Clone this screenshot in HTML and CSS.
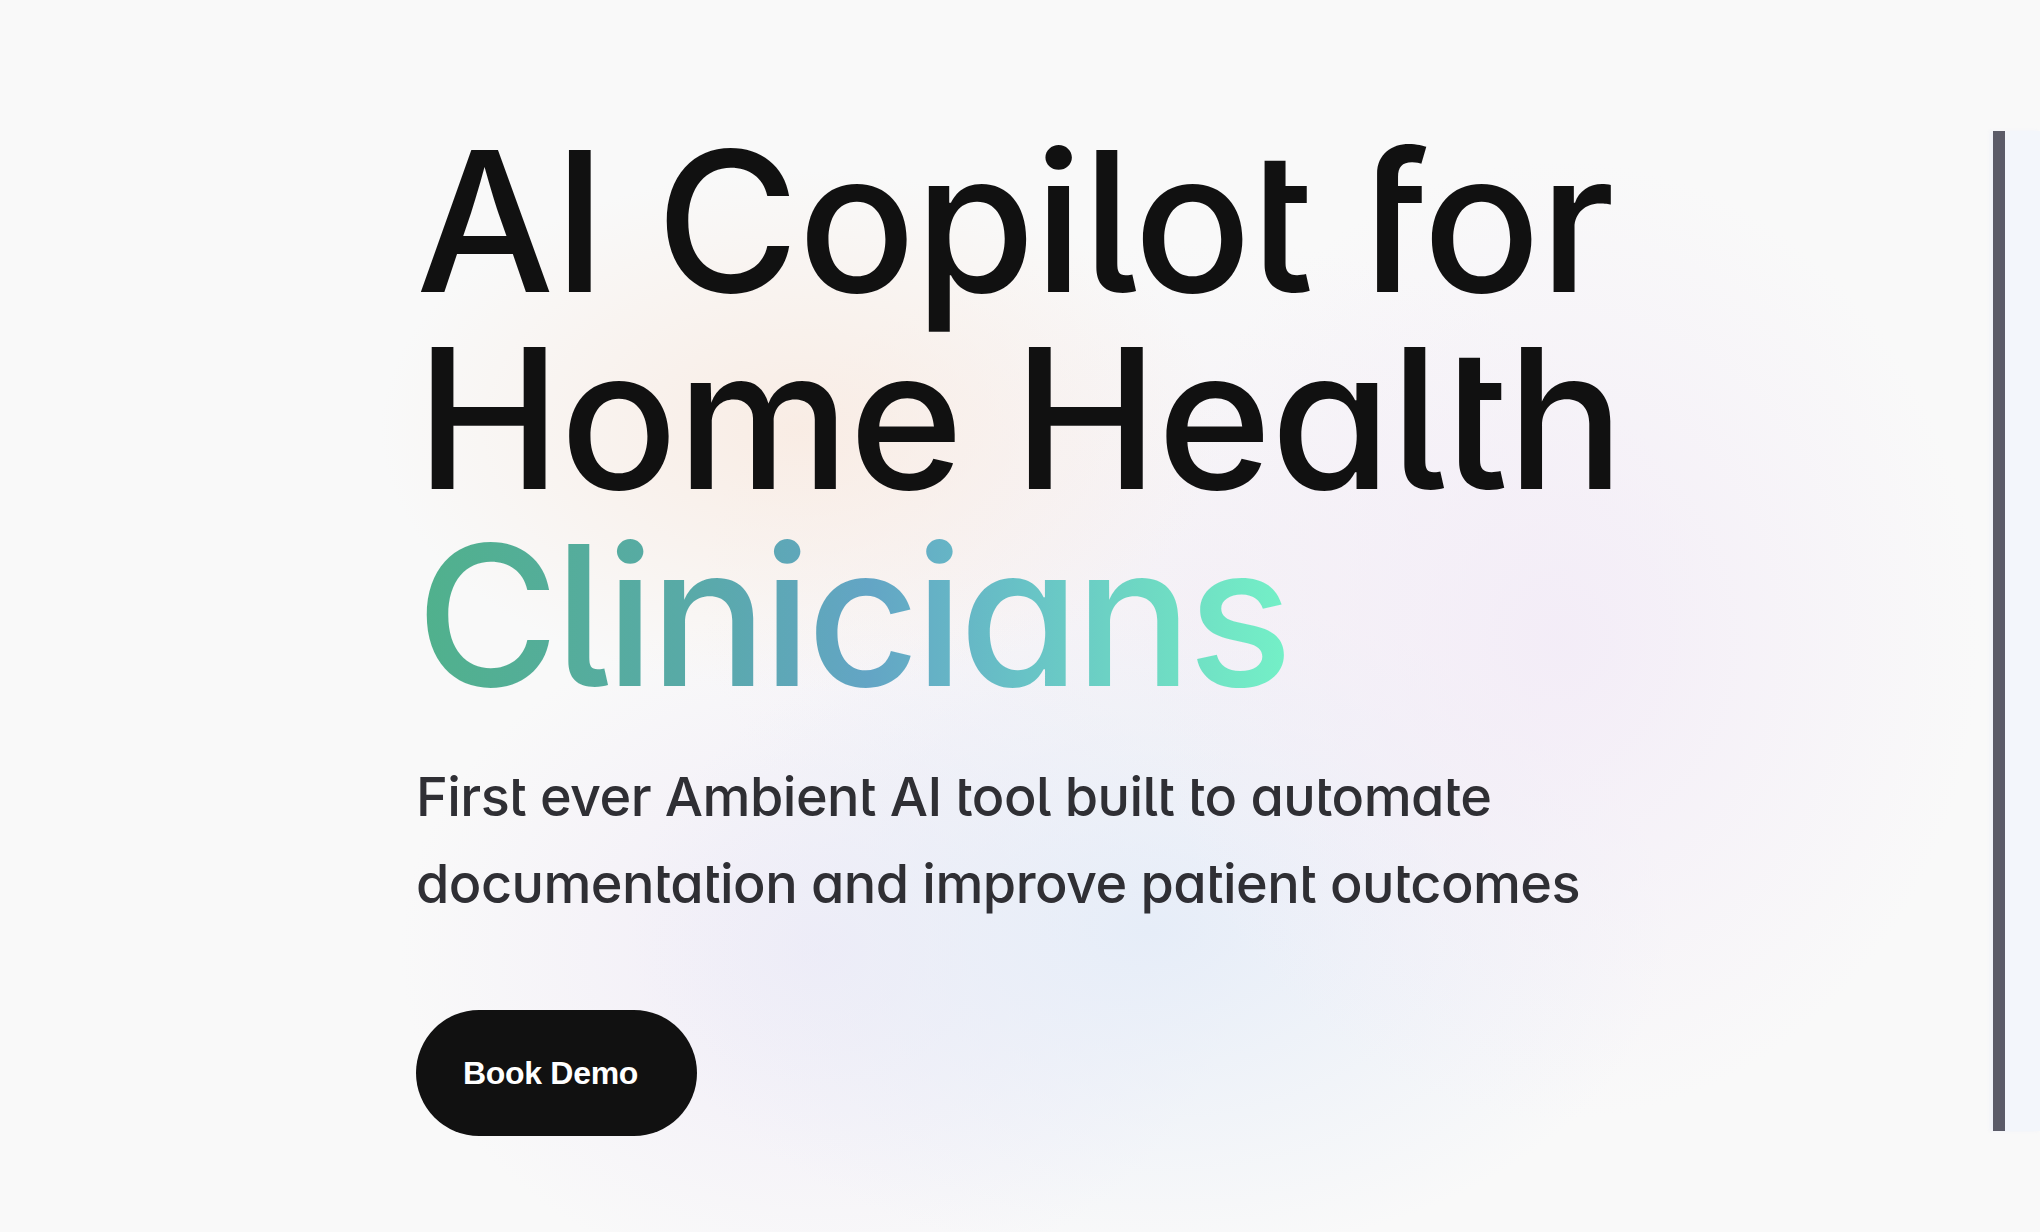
FILE: index.html
```html
<!DOCTYPE html>
<html lang="en">
<head>
<meta charset="utf-8">
<title>AI Copilot for Home Health Clinicians</title>
<link rel="stylesheet" href="styles.css">
</head>
<body>
<main class="hero">
  <section class="hero-content">
    <h1 class="hero-title">
      <span class="title-line">A<span class="plain-i">I</span> Copilot for</span>
      <span class="title-line">Home Health</span>
      <span class="title-line"><span class="title-gradient">Clinicians</span></span>
    </h1>
    <p class="hero-subtitle">First ever Ambient A<span class="plain-i">I</span> tool built to automate<br>documentation and improve patient outcomes</p>
    <a class="btn-demo" href="#">Book Demo</a>
  </section>
  <aside class="hero-panel"></aside>
</main>
</body>
</html>
```
FILE: styles.css
```css
html, body {
  margin: 0;
  padding: 0;
}
body {
  width: 2040px;
  height: 1232px;
  overflow: hidden;
  background: #f9f9f9;
  font-family: Inter, "Noto Sans", sans-serif;
  font-feature-settings: "cv11" 1, "cv05" 1, "salt" 1;
}
.plain-i {
  font-feature-settings: "cv05" 1;
}
.hero {
  display: flex;
  height: 1232px;
  background:
    radial-gradient(ellipse 420px 260px at 800px 430px, rgba(249, 235, 226, 0.9), rgba(249, 235, 226, 0) 100%),
    radial-gradient(ellipse 420px 480px at 1560px 640px, rgba(243, 236, 247, 0.95), rgba(243, 236, 247, 0) 100%),
    radial-gradient(ellipse 520px 330px at 1150px 930px, rgba(230, 237, 248, 1), rgba(230, 237, 248, 0) 100%),
    radial-gradient(ellipse 420px 340px at 820px 950px, rgba(240, 235, 247, 0.95), rgba(240, 235, 247, 0) 100%),
    radial-gradient(ellipse 500px 360px at 1200px 600px, rgba(244, 240, 246, 0.9), rgba(244, 240, 246, 0) 100%),
    #f9f9f9;
}
.hero-content {
  flex: 1;
  padding: 123px 0 0 416px;
}
.hero-title {
  margin: 0;
  font-weight: 540;
  font-size: 195px;
  line-height: 197px;
  letter-spacing: -1.1px;
  color: #111111;
}
.title-line {
  display: block;
  white-space: nowrap;
}
.title-gradient {
  display: inline-block;
  letter-spacing: -4.7px;
  background: linear-gradient(90deg, #50b18c 0%, #58aaa6 30%, #63a5c5 52%, #68c3c6 70%, #6ed9c3 84%, #74f0c7 100%);
  -webkit-background-clip: text;
  background-clip: text;
  color: transparent;
}
.hero-subtitle {
  margin: 39px 0 0;
  font-size: 54px;
  line-height: 87px;
  font-weight: 470;
  letter-spacing: -0.55px;
  color: #2f2f34;
  white-space: nowrap;
}
.btn-demo {
  display: inline-flex;
  align-items: center;
  justify-content: center;
  box-sizing: border-box;
  padding-right: 12px;
  margin-top: 83px;
  width: 281px;
  height: 126px;
  border-radius: 63px;
  background: #111111;
  color: #ffffff;
  text-decoration: none;
  font-family: "Liberation Sans", Arial, sans-serif;
  font-weight: 700;
  font-size: 32px;
  letter-spacing: -0.3px;
}
.hero-panel {
  flex: 0 0 47px;
  margin-top: 131px;
  height: 1000px;
  box-sizing: border-box;
  border-left: 12px solid #5b5b68;
  background: #f3f6fb;
  box-shadow: -3px 0 3px rgba(240, 242, 250, 0.9);
}
```
